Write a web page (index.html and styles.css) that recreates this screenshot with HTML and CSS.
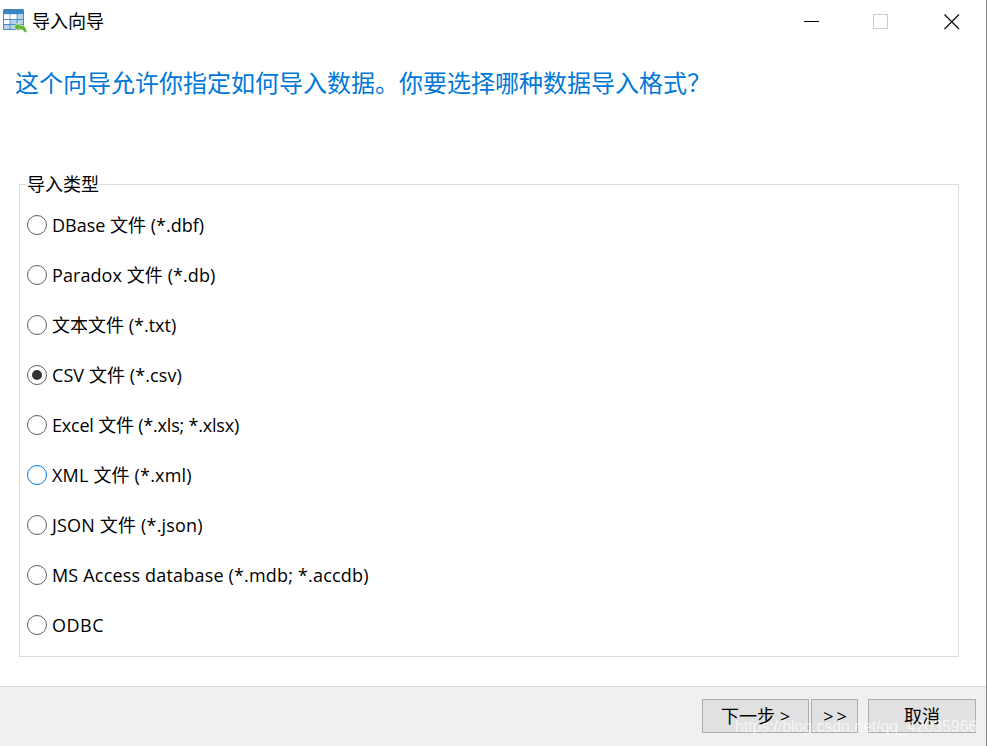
FILE: index.html
```html
<!DOCTYPE html>
<html lang="zh-CN">
<head>
<meta charset="utf-8">
<title>导入向导</title>
<link rel="stylesheet" href="styles.css">
</head>
<body>
<div class="window">
  <div class="main">
    <header class="titlebar">
      <svg class="app-icon" width="28" height="24" viewBox="0 0 28 24">
        <rect x="3" y="0" width="21" height="21" rx="1.500" fill="#b9d3e8"/>
        <path d="M3 1.500A1.500 1.500 0 0 1 4.500 0H22.500A1.500 1.500 0 0 1 24 1.500V5H3Z" fill="#3d85c0"/>
        <path d="M3.500 5V20.500H23.500V5M10 5V20.500M17 5V20.500M3.500 10.500H23.500M3.500 15.500H23.500" fill="none" stroke="#4a8cc4" stroke-width="1"/>
        <rect x="4" y="5.500" width="5.500" height="4.500" fill="#fff"/>
        <rect x="10.500" y="5.500" width="6" height="4.500" fill="#fff"/>
        <rect x="4" y="11" width="5.500" height="4" fill="#fff"/>
        <path d="M13.500 17.800L18.800 13.500V16C23.500 16 27 18 27 23.500H24C24 21.200 21.800 20.200 18.800 20.200V22.500Z" fill="#5fb82e" stroke="#fff" stroke-width=".7"/>
      </svg>
      <span class="title-text">导入向导</span>
      <div class="controls">
        <svg class="ctl ctl-min" width="16" height="16" viewBox="0 0 16 16"><path d="M0 7.500H15" stroke="#000" stroke-width="1"/></svg>
        <svg class="ctl ctl-max" width="16" height="16" viewBox="0 0 16 16"><rect x=".5" y=".5" width="14" height="14" fill="none" stroke="#ccc" stroke-width="1"/></svg>
        <svg class="ctl ctl-close" width="16" height="16" viewBox="0 0 16 16"><path d="M.5 .5L15 15M15 .5L.5 15" stroke="#000" stroke-width="1.100"/></svg>
      </div>
    </header>
    <h1 class="heading">这个向导允许你指定如何导入数据。你要选择哪种数据导入格式？</h1>
    <fieldset class="group">
      <legend class="legend">导入类型</legend>
      <div class="option"><span class="radio"></span><span>DBase 文件 (*.dbf)</span></div>
      <div class="option"><span class="radio"></span><span class="track-s">Paradox 文件 (*.db)</span></div>
      <div class="option"><span class="radio"></span><span>文本文件 (*.txt)</span></div>
      <div class="option"><span class="radio radio-on"></span><span class="track-s">CSV 文件 (*.csv)</span></div>
      <div class="option"><span class="radio"></span><span class="track-n">Excel 文件 (*.xls; *.xlsx)</span></div>
      <div class="option"><span class="radio radio-hover"></span><span class="track-m">XML 文件 (*.xml)</span></div>
      <div class="option"><span class="radio"></span><span class="track-m">JSON 文件 (*.json)</span></div>
      <div class="option"><span class="radio"></span><span class="track-m">MS Access database (*.mdb; *.accdb)</span></div>
      <div class="option"><span class="radio"></span><span class="track-l">ODBC</span></div>
    </fieldset>
    <footer class="footer">
      <button class="btn btn-next">下一步 &gt;</button>
      <button class="btn btn-skip">&gt;&gt;</button>
      <button class="btn btn-cancel">取消</button>
    </footer>
  </div>
  <div class="edge"></div>
  <div class="watermark">https://blog.csdn.net/qq_42035966</div>
</div>
</body>
</html>
```
FILE: styles.css
```css
* { box-sizing: border-box; }
html, body { margin: 0; padding: 0; background: #fff; }
body {
  width: 989px;
  height: 746px;
  overflow: hidden;
  font-family: "Open Sans", "Noto Sans CJK SC", sans-serif;
  color: #000;
}
.window {
  position: relative;
  display: flex;
  width: 989px;
  height: 746px;
}
.main {
  display: flex;
  flex-direction: column;
  width: 986px;
  height: 746px;
  flex: none;
}
.edge {
  width: 1px;
  height: 746px;
  background: #8a8a8a;
  flex: none;
}
.titlebar {
  display: flex;
  align-items: center;
  height: 44px;
  flex: none;
}
.app-icon { margin-bottom: 2px; flex: none; }
.title-text {
  margin-left: 4px;
  margin-bottom: 2px;
  font-size: 18px;
  line-height: 24px;
}
.controls {
  display: flex;
  align-items: center;
  margin-left: auto;
  padding-right: 26px;
}
.ctl-max { margin-left: 53px; }
.ctl-close { margin-left: 55px; }
.heading {
  margin: 21px 0 0 15px;
  font-size: 24px;
  font-weight: 400;
  line-height: 36px;
  color: #0078d7;
  flex: none;
}
.group {
  margin: 74px 0 0 19px;
  padding: 7px 0 0 7px;
  width: 940px;
  height: 482px;
  border: 1px solid #dcdcdc;
  flex: none;
  min-width: 0;
}
.legend {
  padding: 0;
  font-size: 18px;
  line-height: 18px;
}
.option {
  display: flex;
  align-items: center;
  gap: 5px;
  height: 50px;
  font-size: 18px;
  line-height: 24px;
}
.track-n { letter-spacing: -.2px; }
.track-s { letter-spacing: .08px; }
.track-m { letter-spacing: .18px; }
.track-l { letter-spacing: .5px; }
.radio {
  position: relative;
  display: block;
  width: 20px;
  height: 20px;
  border: 1.5px solid #5f5f5f;
  border-radius: 50%;
  background: #fff;
  flex: none;
}
.radio-on::after {
  content: "";
  position: absolute;
  left: 3.500px;
  top: 3.500px;
  width: 10px;
  height: 10px;
  border-radius: 50%;
  background: #333;
}
.radio-hover { border-color: #0078d7; }
.footer {
  display: flex;
  align-items: flex-start;
  margin-top: auto;
  height: 60px;
  padding: 12px 0 0 702px;
  background: #f0f0f0;
  border-top: 1px solid #d8d8d8;
  flex: none;
}
.btn {
  height: 34px;
  padding: 0;
  border: 1px solid #adadad;
  background: #e1e1e1;
  color: #000;
  font-family: inherit;
  font-size: 18px;
  line-height: 24px;
}
.btn-next { width: 107px; }
.btn-skip { width: 47px; margin-left: 2px; padding-left: 4px; letter-spacing: 3px; }
.btn-cancel { width: 108px; margin-left: 10px; }
.watermark {
  position: absolute;
  left: 735px;
  top: 716px;
  font-family: "Liberation Sans", sans-serif;
  font-size: 16px;
  line-height: 22px;
  letter-spacing: -.1px;
  color: rgba(255, 255, 255, .7);
  white-space: nowrap;
}
```
